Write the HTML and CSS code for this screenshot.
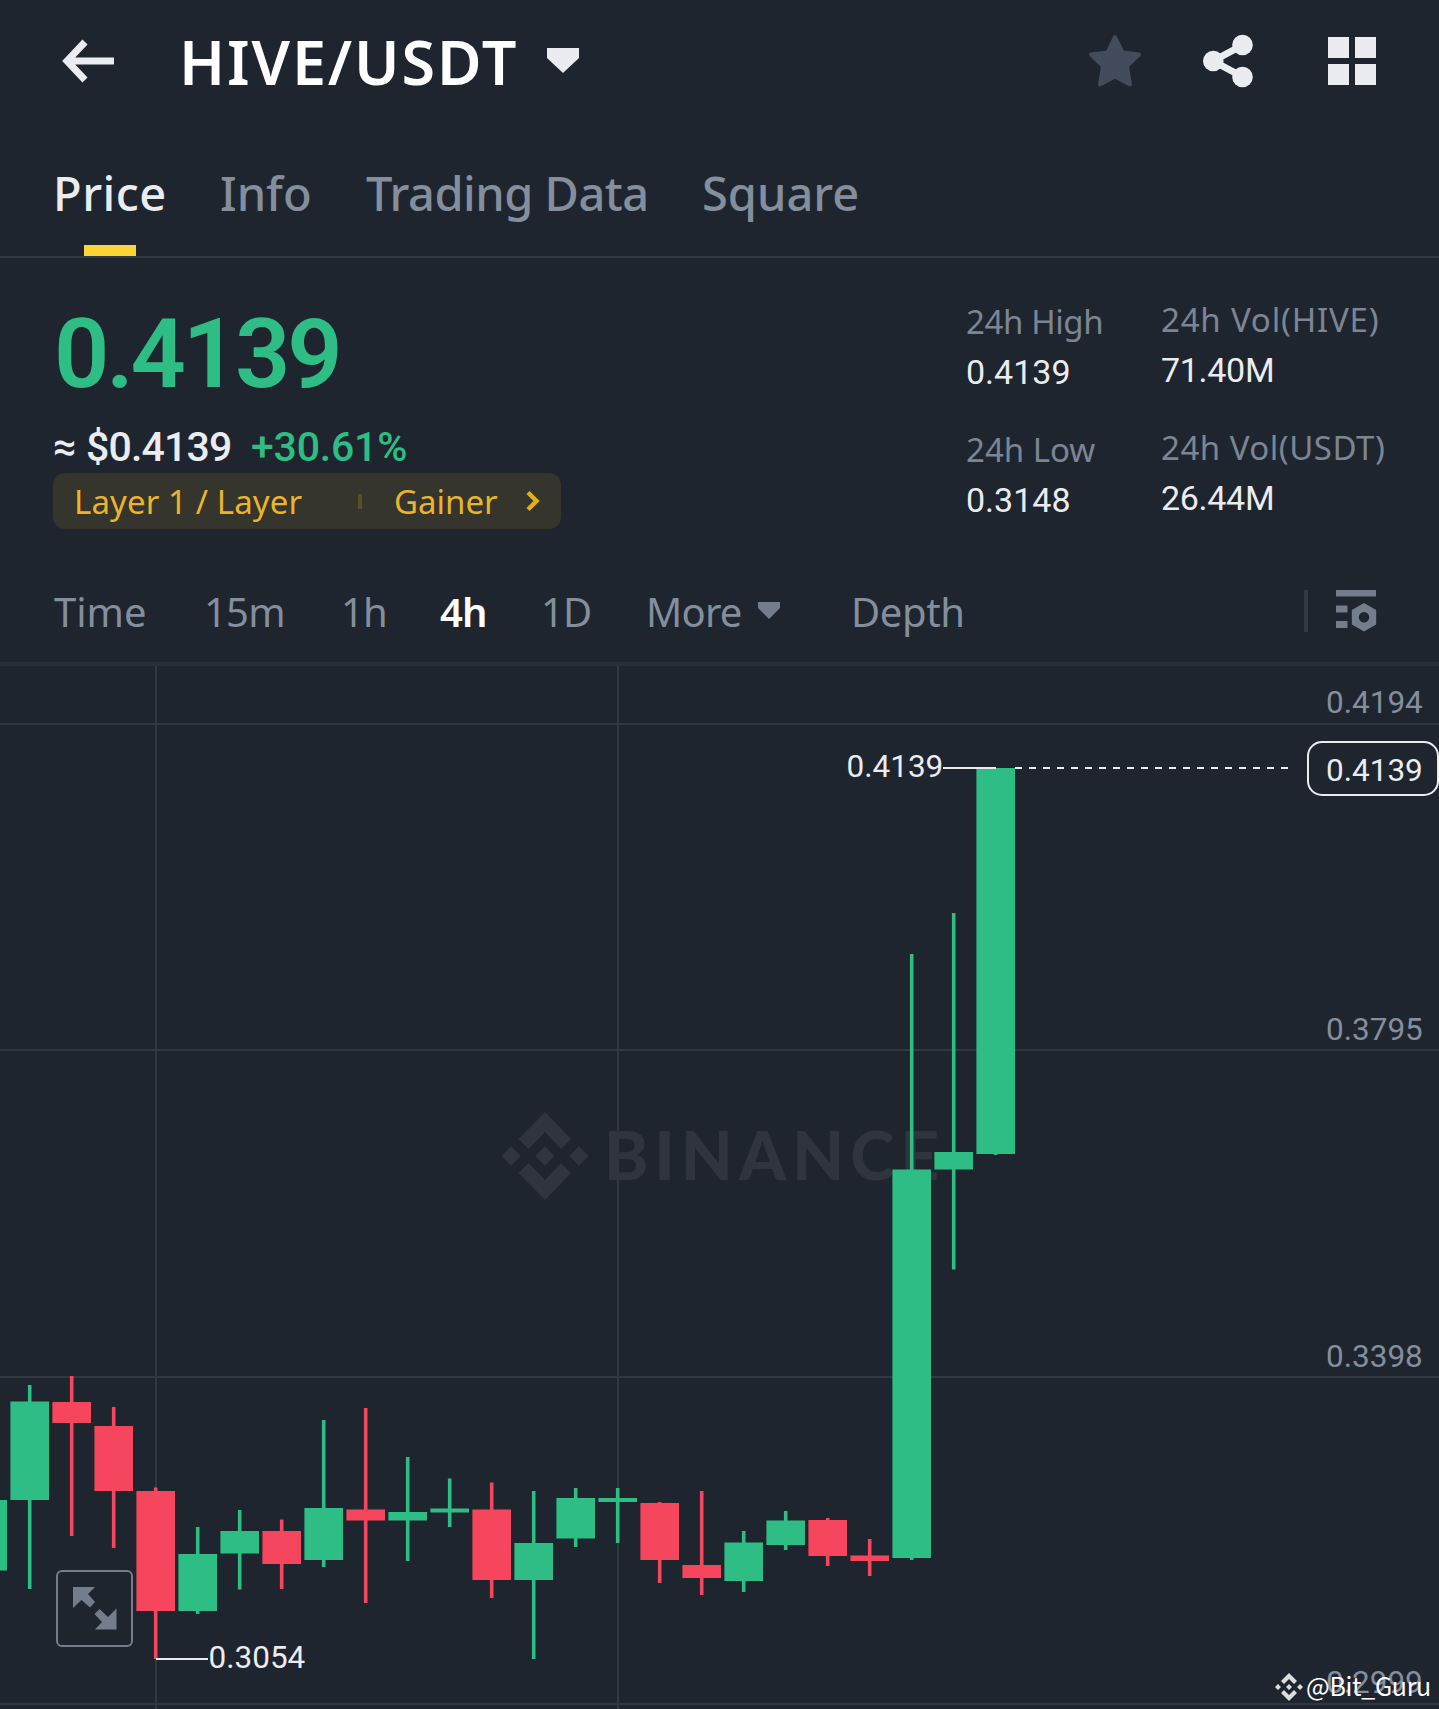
FILE: index.html
```html
<!DOCTYPE html>
<html lang="en">
<head>
  <meta charset="UTF-8">
  <meta name="viewport" content="width=device-width, initial-scale=1.0">
  <title>HIVE/USDT</title>
  <link rel="stylesheet" href="styles.css">
</head>
<body>
  <!-- Header -->
  <header class="header">
    <svg class="back" width="54" height="44" viewBox="0 0 54 44">
      <path d="M53 22H6M24 3L6 22L24 41" fill="none" stroke="#eaecef" stroke-width="7"/>
    </svg>
    <h1 class="pair">HIVE/USDT</h1>
    <svg class="pair-caret" width="32" height="26" viewBox="0 0 32 26">
      <path d="M0 0H32V10L16 25L0 10Z" fill="#eaecef"/>
    </svg>
    <div class="actions">
      <svg width="54" height="54" viewBox="0 0 54 54">
        <path d="M27 3L34.5 18.5L51 20.5L39 32L42 50.5L27 42.5L12 50.5L15 32L3 20.5L19.5 18.5Z" fill="#434c5a" stroke="#434c5a" stroke-width="4" stroke-linejoin="round"/>
      </svg>
      <svg width="50" height="54" viewBox="0 0 50 54">
        <path d="M40 11L10 27L40 43" fill="none" stroke="#eaecef" stroke-width="7"/>
        <circle cx="39.5" cy="11" r="10.3" fill="#eaecef"/>
        <circle cx="10.3" cy="27" r="10.3" fill="#eaecef"/>
        <circle cx="39.5" cy="43" r="10.3" fill="#eaecef"/>
      </svg>
      <svg width="48" height="48" viewBox="0 0 48 48">
        <path d="M0 0H21V21H0ZM27 0H48V21H27ZM0 27H21V48H0ZM27 27H48V48H27Z" fill="#eaecef"/>
      </svg>
    </div>
  </header>

  <!-- Tabs -->
  <nav class="tabs">
    <a class="tab active">Price</a>
    <a class="tab info">Info</a>
    <a class="tab trading">Trading Data</a>
    <a class="tab square">Square</a>
  </nav>

  <!-- Price summary -->
  <section class="summary">
    <div class="price-box">
      <div class="last-price">0.4139</div>
      <div class="fiat"><span class="approx">≈</span><span class="usd">$0.4139</span><span class="change">+30.61%</span></div>
      <div class="tags">
        <span class="tag-layer">Layer 1 / Layer</span>
        <span class="tag-line"></span>
        <span class="tag-gainer">Gainer</span>
        <svg width="16" height="22" viewBox="0 0 16 22">
          <path d="M2 2.5L10.5 11L2 19.5" fill="none" stroke="#e3ae1c" stroke-width="4.5"/>
        </svg>
      </div>
    </div>
    <div class="stats">
      <div class="stats-col">
        <div class="label l-high">24h High</div>
        <div class="value">0.4139</div>
        <div class="label l-low">24h Low</div>
        <div class="value">0.3148</div>
      </div>
      <div class="stats-col volume">
        <div class="label l-hive">24h Vol(HIVE)</div>
        <div class="value">71.40M</div>
        <div class="label l-usdt">24h Vol(USDT)</div>
        <div class="value">26.44M</div>
      </div>
    </div>
  </section>

  <!-- Timeframes -->
  <nav class="frames">
    <span class="frame f-time">Time</span>
    <span class="frame f-15m">15m</span>
    <span class="frame f-1h">1h</span>
    <span class="frame f-4h active">4h</span>
    <span class="frame f-1d">1D</span>
    <span class="frame f-more">More
      <svg width="22" height="17" viewBox="0 0 22 17"><path d="M0 0H22V6L11 17L0 6Z" fill="#747d8c"/></svg>
    </span>
    <span class="frame f-depth">Depth</span>
    <span class="frame-line"></span>
    <svg class="settings" width="41" height="42" viewBox="0 0 41 42">
      <path fill="#747d8c" fill-rule="evenodd" d="M0 0H40V6.5H0ZM0 15.5H11.5V22.5H0ZM0 31H11.5V38H0ZM28 13L40.2 20V34.5L28 41.5L15.8 34.5V20ZM28 22A5.2 5.2 0 1 0 28 32.4A5.2 5.2 0 1 0 28 22Z"/>
    </svg>
  </nav>

  <!-- Chart -->
  <main class="chart">
    <svg width="1439" height="1043" viewBox="0 666 1439 1043">
      <g class="grid">
        <path d="M156 666V1709M618 666V1709M0 724H1439M0 1050H1439M0 1377H1439M0 1704H1439"/>
      </g>
      <g class="watermark">
        <path d="M545 1112L571 1139L561 1149L545 1132L528.5 1149L518.500 1139ZM545 1200L571 1173L561 1163L545 1180L528.5 1163L518.500 1173ZM511 1146L520.5 1156L511 1166L501.5 1156ZM545 1146L554.5 1156L545 1166L535.5 1156ZM579 1146L588.5 1156L579 1166L569.5 1156Z"/>
        <text x="604" y="1180" textLength="335">BINANCE</text>
      </g>
      <g id="candles"></g>
      <g class="marks">
        <path d="M943 768H996M156 1659H208"/>
        <path d="M1015 768H1289" stroke-dasharray="7 7"/>
        <rect x="1308" y="742" width="130" height="53" rx="14"/>
      </g>
      <g class="axis">
        <text x="1326" y="713">0.4194</text>
        <text x="1326" y="1040">0.3795</text>
        <text x="1326" y="1367">0.3398</text>
        <text x="1326" y="1693">0.2999</text>
        <text class="bright" x="1326" y="781">0.4139</text>
        <text class="bright" x="846.5" y="777">0.4139</text>
        <text class="bright" x="208.5" y="1668">0.3054</text>
      </g>
    </svg>
    <button class="expand">
      <svg width="44" height="43" viewBox="0 0 44 43">
        <path d="M0 0H22L15 7L22 15L17 20.5L8.5 13L0 21ZM43.5 42.5H22L29 35L21.5 27L26.5 22L35 30L43.5 21.5Z" fill="#747d8c"/>
      </svg>
    </button>
    <div class="author">
      <svg width="28" height="28" viewBox="0 0 28 28">
        <path fill="#dcdcdc" d="M14 0L22 8L19 11L14 6L9 11L6 8ZM14 28L22 20L19 17L14 22L9 17L6 20ZM3 11L6 14L3 17L0 14ZM14 11L17 14L14 17L11 14ZM25 11L28 14L25 17L22 14Z"/>
      </svg>
      <span>@Bit_Guru</span>
    </div>
  </main>

  <script>
    // x center, wick top, wick bottom, body top, body bottom, direction
    const candles = [
      [-12.3, 1500, 1570, 1500, 1570.5, "up"],
      [29.7, 1385, 1589, 1401.5, 1500, "up"],
      [71.7, 1376, 1536, 1402, 1423, "down"],
      [113.7, 1407, 1548, 1426, 1491, "down"],
      [155.7, 1487.5, 1659, 1491, 1611, "down"],
      [197.7, 1527, 1614, 1554, 1611, "up"],
      [239.7, 1510, 1589.5, 1531, 1553.5, "up"],
      [281.7, 1519.5, 1589, 1531, 1564, "down"],
      [323.7, 1420, 1567, 1508, 1560, "up"],
      [365.7, 1408, 1603, 1509.5, 1520.5, "down"],
      [407.7, 1457, 1561, 1512, 1520.5, "up"],
      [449.7, 1478.5, 1527, 1508.5, 1512.5, "up"],
      [491.7, 1482.5, 1598, 1509.5, 1580, "down"],
      [533.7, 1491, 1659, 1543, 1580, "up"],
      [575.7, 1488, 1547, 1498, 1538.5, "up"],
      [617.7, 1488, 1543, 1498, 1502, "up"],
      [659.7, 1502, 1583, 1503, 1560, "down"],
      [701.7, 1491, 1595, 1565, 1578, "down"],
      [743.7, 1531, 1592, 1542.5, 1581, "up"],
      [785.7, 1511, 1550, 1520.5, 1545, "up"],
      [827.7, 1518, 1566, 1520, 1556, "down"],
      [869.7, 1539, 1576, 1555.5, 1561, "down"],
      [911.7, 954, 1560, 1169.5, 1558, "up"],
      [953.7, 913, 1269.5, 1152, 1169.5, "up"],
      [995.7, 768, 1155, 768, 1154, "up"]
    ];

    // Draw the candles
    const group = document.getElementById("candles");
    group.innerHTML = candles.map(([x, high, low, top, bottom, dir]) =>
      `<g class="${dir}">
        <rect class="wick" x="${x - 1.8}" y="${high}" width="3.6" height="${low - high}"/>
        <rect x="${x - 19.3}" y="${top}" width="38.6" height="${bottom - top}"/>
      </g>`
    ).join("");
  </script>
</body>
</html>
```
FILE: styles.css
```css
* {
  box-sizing: border-box;
}

body {
  margin: 0;
  width: 1439px;
  height: 1709px;
  overflow: hidden;
  background-color: #1f252f;
  color: #eaecef;
  font-family: "Noto Sans", sans-serif;
}

svg {
  display: block;
  flex: none;
}

/* Header */
.header {
  display: flex;
  align-items: center;
  height: 121px;
  padding: 0 63px 0 61px;
}

.pair {
  margin: 2px 0 0 64px;
  width: 368px;
  font-size: 61px;
  font-weight: 600;
  line-height: 80px;
  letter-spacing: 1.9px;
  color: #fff;
  white-space: nowrap;
}

.actions {
  display: flex;
  align-items: center;
  margin-left: auto;
}

.actions svg:nth-child(2) {
  margin: 0 75px 0 61px;
}

/* Tabs */
.tabs {
  display: flex;
  height: 137px;
  padding: 42px 0 0 53px;
  border-bottom: 2px solid #323943;
}

.tab {
  position: relative;
  width: 167px;
  font-size: 47px;
  font-weight: 500;
  line-height: 60px;
  color: #848e9c;
  white-space: nowrap;
}

.tab.info {
  width: 146px;
}

.tab.trading {
  width: 336px;
  letter-spacing: -0.5px;
}

.tab.active {
  color: #eaecef;
  letter-spacing: 0.5px;
}

.tab.active::after {
  content: "";
  position: absolute;
  left: 31px;
  bottom: 0;
  width: 52px;
  height: 11px;
  background-color: #fcd535;
}

/* Summary */
.summary {
  display: flex;
  justify-content: space-between;
  height: 304px;
  font-family: Roboto, sans-serif;
}

.price-box {
  padding: 46px 0 0 53px;
}

.last-price {
  margin-left: 1px;
  font-size: 97px;
  font-weight: 600;
  line-height: 100px;
  letter-spacing: -3.2px;
  color: #2ebd85;
}

.fiat {
  display: flex;
  margin-top: 18px;
  margin-bottom: 1px;
  font-size: 41px;
  font-weight: 500;
  line-height: 50px;
}

.approx {
  width: 33px;
}

.usd {
  width: 165px;
  letter-spacing: -0.8px;
}

.change {
  color: #2ebd85;
  letter-spacing: -0.2px;
}

.tags {
  display: flex;
  align-items: center;
  width: 508px;
  height: 56px;
  padding-left: 21px;
  border-radius: 12px;
  background-color: #35342d;
  color: #e8b52b;
  font-family: "Noto Sans", sans-serif;
  font-size: 33px;
}

.tag-layer {
  width: 284px;
  letter-spacing: 0.1px;
}

.tag-line {
  width: 4px;
  height: 15px;
  background-color: #5b4d27;
}

.tag-gainer {
  width: 132px;
  margin-left: 32px;
}

.stats {
  display: flex;
  width: 473px;
  padding-top: 38px;
  font-size: 34px;
  line-height: 50px;
}

.stats-col {
  width: 195px;
}

.stats-col.volume {
  width: 278px;
  margin-top: -2px;
}

.label {
  height: 51px;
  padding-top: 1px;
  color: #7c8594;
  font-family: "Noto Sans", sans-serif;
  font-size: 33px;
  white-space: nowrap;
}

.l-high {
  letter-spacing: -0.4px;
}

.l-hive {
  letter-spacing: 0.8px;
}

.l-usdt {
  letter-spacing: 0.5px;
}

.value {
  height: 77px;
}

.volume .value {
  letter-spacing: -0.3px;
}

/* Timeframes */
.frames {
  display: flex;
  align-items: center;
  height: 104px;
  padding: 0 0 2px 54px;
  border-bottom: 4px solid #282f39;
  color: #848e9c;
  font-size: 40px;
}

.frame {
  white-space: nowrap;
}

.frame.active {
  color: #fff;
  font-weight: 600;
}

.f-time {
  width: 150px;
}

.f-15m {
  width: 137px;
  letter-spacing: -0.8px;
}

.f-1h {
  width: 99px;
  letter-spacing: -0.8px;
}

.f-4h {
  width: 101px;
  letter-spacing: -0.8px;
}

.f-1d {
  width: 105px;
  letter-spacing: -0.8px;
}

.f-more {
  display: flex;
  align-items: center;
  justify-content: space-between;
  width: 134px;
  letter-spacing: -0.8px;
}

.f-more svg {
  margin-top: -2px;
}

.f-depth {
  width: 453px;
  margin-left: 71px;
  letter-spacing: -0.4px;
}

.frame-line {
  width: 4px;
  height: 42px;
  background-color: #323943;
}

.settings {
  margin-left: 28px;
}

/* Chart */
.chart {
  position: relative;
  height: 1043px;
}

.grid path {
  fill: none;
  stroke: #313842;
  stroke-width: 2;
}

.watermark {
  fill: #2f343f;
  font-family: Lato, sans-serif;
  font-size: 67px;
  font-weight: 900;
}

.up {
  fill: #2ebd85;
}

.down {
  fill: #f6465d;
}

.marks {
  fill: none;
  stroke: #eaecef;
  stroke-width: 2;
}

.axis {
  fill: #848e9c;
  font-family: Roboto, sans-serif;
  font-size: 31.5px;
}

.axis .bright {
  fill: #eaecef;
}

.expand {
  position: absolute;
  left: 56px;
  top: 904px;
  display: flex;
  align-items: center;
  justify-content: center;
  width: 77px;
  height: 77px;
  padding: 0;
  border: 2px solid #747d8c;
  border-radius: 6px;
  background: none;
}

.author {
  position: absolute;
  right: 8px;
  bottom: 6px;
  display: flex;
  align-items: center;
  gap: 3px;
  color: #fff;
  font-family: "Noto Sans CJK SC", sans-serif;
  font-size: 25px;
  line-height: 36px;
}

.author span {
  margin-top: -3px;
  letter-spacing: -0.3px;
}
```
